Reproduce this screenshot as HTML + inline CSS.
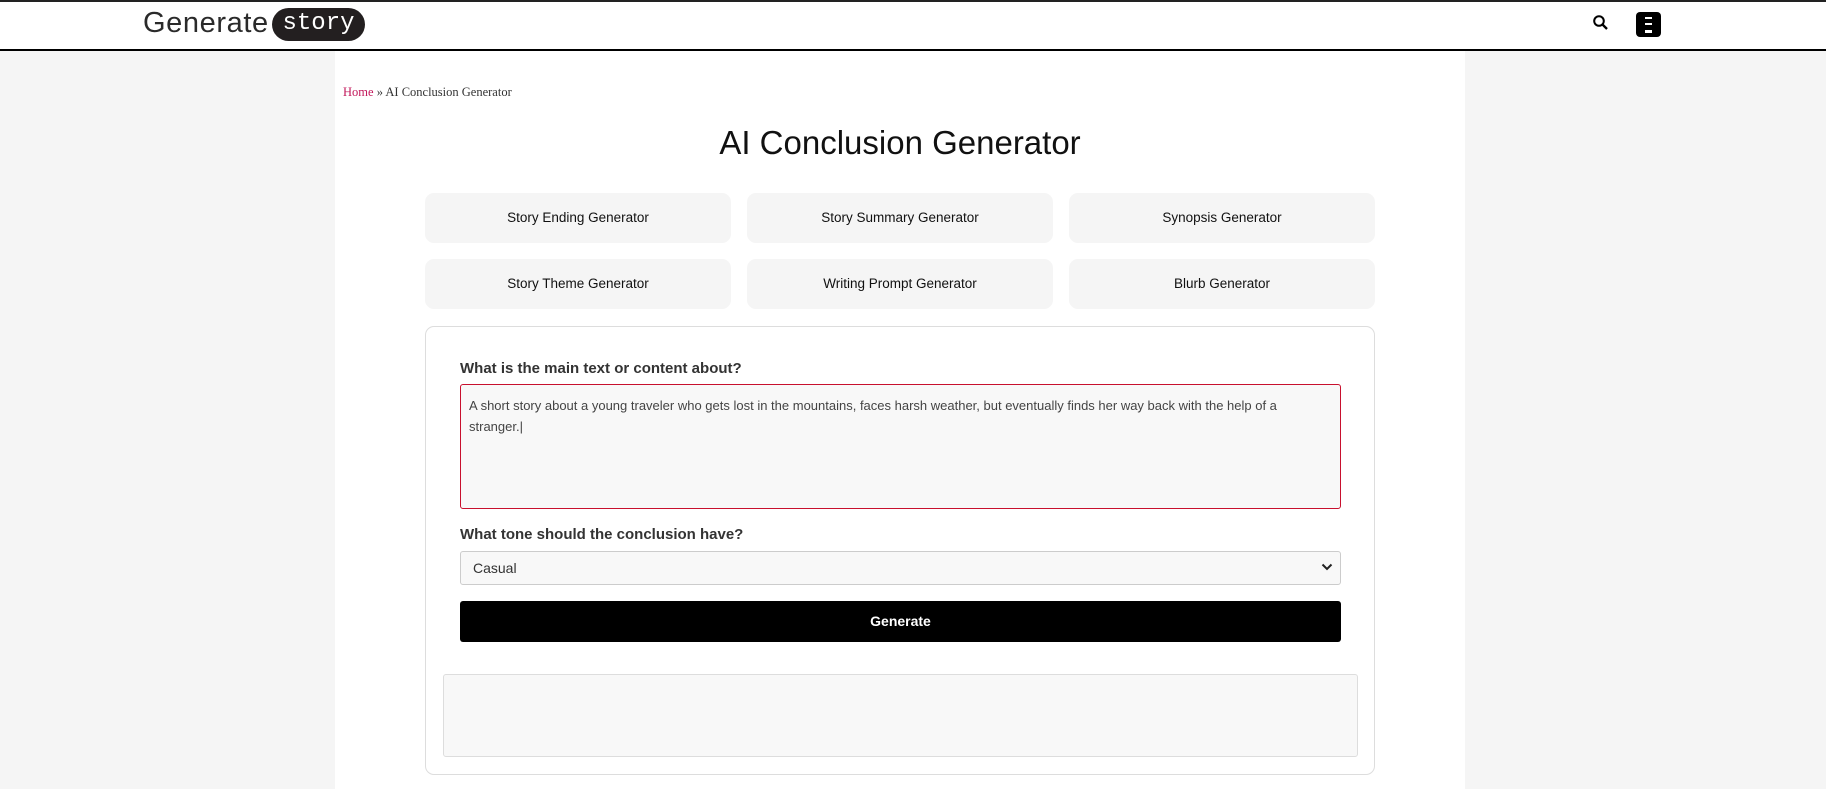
<!DOCTYPE html>
<html><head><meta charset="utf-8"><style>
*{box-sizing:border-box;margin:0;padding:0}
body{width:1826px;height:789px;overflow:hidden;background:#f5f5f5;font-family:"Liberation Sans",Arial,sans-serif;position:relative}
.abs{position:absolute}
header{position:absolute;left:0;top:0;width:1826px;height:51px;background:#fff;border-top:2px solid #222;border-bottom:2px solid #000}
.logo{left:143px;top:7px;font-size:29px;color:#2a2a2a;letter-spacing:0.6px;font-family:"Liberation Sans",sans-serif;font-weight:400}
.pill{left:272px;top:8px;width:93px;height:33px;background:#231f20;border-radius:17px;color:#fff;font-family:"Liberation Mono",monospace;font-size:24px;text-align:center;line-height:31px}
.col{left:335px;top:51px;width:1130px;height:738px;background:#fff}
.crumb{left:343px;top:85px;font-family:"Liberation Serif",serif;font-size:12.5px;color:#333}
.crumb span{color:#c2185b}
h1{position:absolute;left:0;width:1800px;top:124px;text-align:center;font-weight:400;font-size:33px;color:#111}
.btn{position:absolute;width:306px;height:50px;background:#f5f5f5;border-radius:9px;font-size:13.5px;color:#111;text-align:center;line-height:50px}
.card{left:425px;top:326px;width:950px;height:449px;border:1px solid #ddd;border-radius:9px;background:#fff}
.lbl{font-weight:bold;font-size:15px;color:#333}
.ta{left:460px;top:384px;width:881px;height:125px;border:1px solid #c8102e;border-radius:3px;background:#f8f8f8;padding:10px 8px;font-size:13px;line-height:21px;color:#444}
.sel{left:460px;top:551px;width:881px;height:34px;border:1px solid #ccc;border-radius:3px;background:#f8f8f8;padding:0 12px;font-size:14px;line-height:32px;color:#333}
.gen{left:460px;top:601px;width:881px;height:41px;background:#000;border-radius:3px;color:#fff;font-weight:bold;font-size:14px;text-align:center;line-height:41px}
.out{left:443px;top:674px;width:915px;height:83px;border:1px solid #ddd;border-radius:3px;background:#f8f8f8}
</style></head><body>
<header></header>
<div class="abs logo">Generate</div>
<div class="abs pill">story</div>
<svg class="abs" style="left:1592px;top:14px" width="18" height="18" viewBox="0 0 18 18"><circle cx="7" cy="7" r="4.8" fill="none" stroke="#000" stroke-width="2"/><line x1="10.5" y1="10.5" x2="15" y2="15" stroke="#000" stroke-width="2.3"/></svg>
<div class="abs" style="left:1636px;top:12px;width:25px;height:25px;background:#000;border-radius:4px"></div>
<div class="abs" style="left:1645px;top:17px;width:7px;height:2px;background:#fff"></div>
<div class="abs" style="left:1645px;top:23px;width:7px;height:2px;background:#fff"></div>
<div class="abs" style="left:1645px;top:30px;width:7px;height:3px;background:#fff"></div>
<div class="abs col"></div>
<div class="abs crumb"><span>Home</span> » AI Conclusion Generator</div>
<h1>AI Conclusion Generator</h1>
<div class="btn" style="left:425px;top:193px">Story Ending Generator</div>
<div class="btn" style="left:747px;top:193px">Story Summary Generator</div>
<div class="btn" style="left:1069px;top:193px">Synopsis Generator</div>
<div class="btn" style="left:425px;top:259px">Story Theme Generator</div>
<div class="btn" style="left:747px;top:259px">Writing Prompt Generator</div>
<div class="btn" style="left:1069px;top:259px">Blurb Generator</div>
<div class="abs card"></div>
<div class="abs lbl" style="left:460px;top:360px">What is the main text or content about?</div>
<div class="abs ta">A short story about a young traveler who gets lost in the mountains, faces harsh weather, but eventually finds her way back with the help of a stranger.|</div>
<div class="abs lbl" style="left:460px;top:526px">What tone should the conclusion have?</div>
<div class="abs sel">Casual</div>
<svg class="abs" style="left:1321px;top:563px" width="12" height="9" viewBox="0 0 12 9"><path d="M1.5 1.5 L6 6 L10.5 1.5" fill="none" stroke="#222" stroke-width="2"/></svg>
<div class="abs gen">Generate</div>
<div class="abs out"></div>
</body></html>
